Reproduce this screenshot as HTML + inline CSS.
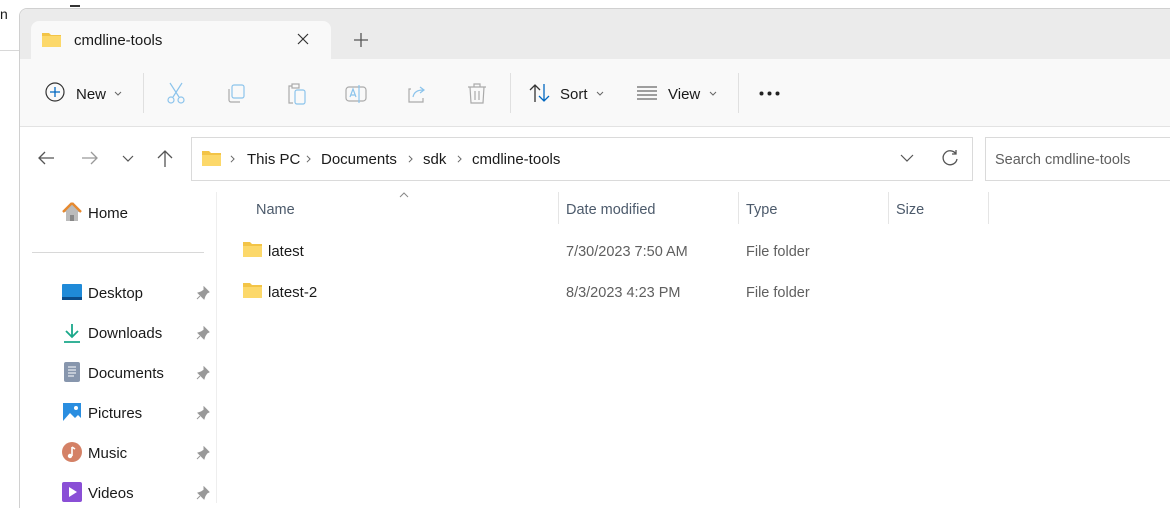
<!DOCTYPE html>
<html><head><meta charset="utf-8"><style>
*{margin:0;padding:0;box-sizing:border-box}
body{width:1170px;height:503px;overflow:hidden;background:#fff;font-family:"Liberation Sans",sans-serif;font-size:14px;color:#1a1a1a;position:relative}
.a{position:absolute}
.win{left:19px;top:8px;width:1160px;height:500px;background:#fff;border-left:1px solid #d0d0d0;border-top:1px solid #d0d0d0;border-top-left-radius:8px;overflow:hidden}
.t{white-space:nowrap}
.g{color:#5f5f5f}
</style></head><body>
<div class="a" style="left:0;top:50px;width:19px;height:1px;background:#d8d8d8"></div>
<div class="a t" style="left:0;top:6px;font-size:14px">n</div>
<div class="a" style="left:70px;top:5px;width:10px;height:2px;background:#333"></div>
<div class="a win">
 <div class="a" style="left:0;top:0;width:1160px;height:50px;background:#ebebeb"></div>
 <div class="a" style="left:11px;top:12px;width:300px;height:40px;background:#f9f9f9;border-radius:8px 8px 0 0"></div>
 <div class="a" style="left:0;top:50px;width:1160px;height:68px;background:#f9f9f9;border-bottom:1px solid #e3e3e3"></div>
</div>
<!-- tab -->
<svg class="a" style="left:42px;top:32px" width="19" height="15"><path d="M0 1h7l2 2h10v12H0z" fill="#f3c447"/><rect x="0" y="4" width="19" height="11" fill="#fcd86a"/></svg>
<div class="a t" style="left:74px;top:32px;font-size:15px">cmdline-tools</div>
<svg class="a" style="left:297px;top:33px" width="12" height="12"><path d="M1 1l10 10M11 1L1 11" stroke="#333" stroke-width="1.2"/></svg>
<svg class="a" style="left:354px;top:33px" width="14" height="14"><path d="M7 0v14M0 7h14" stroke="#555" stroke-width="1.3"/></svg>
<!-- toolbar -->
<svg class="a" style="left:45px;top:82px" width="20" height="20"><circle cx="10" cy="10" r="9" fill="none" stroke="#333" stroke-width="1.2"/><path d="M10 5v10M5 10h10" stroke="#0067c0" stroke-width="1.3"/></svg>
<div class="a t" style="left:76px;top:86px;font-size:15px">New</div>
<svg class="a" style="left:114px;top:91px" width="8" height="5"><path d="M1 1l3 3 3-3" stroke="#666" fill="none"/></svg>
<div class="a" style="left:143px;top:73px;width:1px;height:40px;background:#e0e0e0"></div>
<svg class="a" style="left:166px;top:82px" width="20" height="22" fill="none" stroke="#8cc4ec" stroke-width="1.2"><path d="M4 1l9 14M16 1L7 15"/><circle cx="5" cy="18" r="3"/><circle cx="15" cy="18" r="3"/></svg>
<svg class="a" style="left:226px;top:84px" width="20" height="20" fill="none" stroke-width="1.2"><rect x="6" y="1" width="12" height="13" rx="2" stroke="#8cc4ec"/><path d="M3 5v11a2 2 0 0 0 2 2h9" stroke="#aaa"/></svg>
<svg class="a" style="left:286px;top:83px" width="20" height="22" fill="none" stroke-width="1.2"><path d="M6 3H3v17h4" stroke="#aaa"/><rect x="6" y="1" width="7" height="4" stroke="#aaa"/><rect x="9" y="7" width="10" height="14" rx="2" stroke="#8cc4ec"/></svg>
<svg class="a" style="left:345px;top:84px" width="22" height="20" fill="none" stroke-width="1.2"><rect x="1" y="3" width="20" height="14" rx="3" stroke="#aaa"/><path d="M5 13l3-8 3 8M6 11h4" stroke="#8cc4ec"/><path d="M14 1v18" stroke="#8cc4ec"/></svg>
<svg class="a" style="left:406px;top:84px" width="22" height="20" fill="none" stroke-width="1.2"><path d="M5 5H3v13h14v-4" stroke="#aaa"/><path d="M7 13c1-5 5-7 10-7M14 3l4 3-4 3" stroke="#8cc4ec"/></svg>
<svg class="a" style="left:467px;top:83px" width="20" height="22" fill="none" stroke="#aaa" stroke-width="1.2"><path d="M1 4h18M7 4V1h6v3M3 4l1 16h12l1-16M8 8v9M12 8v9"/></svg>
<div class="a" style="left:510px;top:73px;width:1px;height:40px;background:#e0e0e0"></div>
<svg class="a" style="left:529px;top:83px" width="22" height="20" fill="none" stroke-width="1.3"><path d="M6 19V2M1 7l5-5 5 5" stroke="#333"/><path d="M15 1v17M10 13l5 5 5-5" stroke="#0067c0"/></svg>
<div class="a t" style="left:560px;top:86px;font-size:15px">Sort</div>
<svg class="a" style="left:596px;top:91px" width="8" height="5"><path d="M1 1l3 3 3-3" stroke="#666" fill="none"/></svg>
<svg class="a" style="left:637px;top:86px" width="20" height="14"><path d="M0 1h20M0 5h20M0 9h20M0 13h20" stroke="#444" stroke-width="1.1"/></svg>
<div class="a t" style="left:668px;top:86px;font-size:15px">View</div>
<svg class="a" style="left:709px;top:91px" width="8" height="5"><path d="M1 1l3 3 3-3" stroke="#666" fill="none"/></svg>
<div class="a" style="left:738px;top:73px;width:1px;height:40px;background:#e0e0e0"></div>
<svg class="a" style="left:759px;top:91px" width="22" height="5"><circle cx="2.5" cy="2.5" r="2" fill="#222"/><circle cx="10.5" cy="2.5" r="2" fill="#222"/><circle cx="18.5" cy="2.5" r="2" fill="#222"/></svg>
<!-- nav -->
<svg class="a" style="left:37px;top:150px" width="18" height="16" fill="none" stroke="#555" stroke-width="1.3"><path d="M17 8H2M8 2L2 8l6 6"/></svg>
<svg class="a" style="left:81px;top:150px" width="18" height="16" fill="none" stroke="#999" stroke-width="1.3"><path d="M1 8h15M10 2l6 6-6 6"/></svg>
<svg class="a" style="left:122px;top:155px" width="12" height="7" fill="none" stroke="#555" stroke-width="1.2"><path d="M1 1l5 5 5-5"/></svg>
<svg class="a" style="left:156px;top:149px" width="18" height="18" fill="none" stroke="#555" stroke-width="1.3"><path d="M9 18V2M2 9l7-7 7 7"/></svg>
<div class="a" style="left:191px;top:137px;width:782px;height:44px;border:1px solid #dadada;background:#fff"></div>
<svg class="a" style="left:202px;top:151px" width="19" height="15"><path d="M0 0h7l2 2h10v13H0z" fill="#f3c447"/><rect x="0" y="4" width="19" height="11" fill="#fcd86a"/></svg>
<svg style="display:none"><symbol id="chev" viewBox="0 0 6 10"><path d="M1 1l4 4-4 4" fill="none" stroke="#666" stroke-width="1.2"/></symbol></svg>
<svg class="a" style="left:230px;top:155px" width="5" height="8"><use href="#chev"/></svg>
<div class="a t" style="left:247px;top:151px;font-size:15px">This PC</div>
<svg class="a" style="left:306px;top:155px" width="5" height="8"><use href="#chev"/></svg>
<div class="a t" style="left:321px;top:151px;font-size:15px">Documents</div>
<svg class="a" style="left:408px;top:155px" width="5" height="8"><use href="#chev"/></svg>
<div class="a t" style="left:423px;top:151px;font-size:15px">sdk</div>
<svg class="a" style="left:457px;top:155px" width="5" height="8"><use href="#chev"/></svg>
<div class="a t" style="left:472px;top:151px;font-size:15px">cmdline-tools</div>
<svg class="a" style="left:900px;top:154px" width="14" height="8" fill="none" stroke="#555" stroke-width="1.2"><path d="M1 1l6 6 6-6"/></svg>
<svg class="a" style="left:941px;top:149px" width="18" height="18" fill="none" stroke="#555" stroke-width="1.3"><path d="M15 5A7 7 0 1 0 16 10M15 1v4h-4"/></svg>
<div class="a" style="left:985px;top:137px;width:200px;height:44px;border:1px solid #dadada;background:#fff"></div>
<div class="a t" style="left:995px;top:152px;font-size:14.5px;color:#5f5f5f">Search cmdline-tools</div>
<!-- sidebar -->
<div class="a" style="left:216px;top:192px;width:1px;height:311px;background:#eee"></div>
<svg class="a" style="left:62px;top:202px" width="20" height="19"><path d="M10 1L1 10h3v9h12v-9h3z" fill="#bbb"/><path d="M10 1L1 10M10 1l9 9" stroke="#e6892f" stroke-width="2.4" fill="none"/><rect x="8" y="13" width="4" height="6" fill="#888"/></svg>
<div class="a t" style="left:88px;top:205px;font-size:15px">Home</div>
<div class="a" style="left:32px;top:252px;width:172px;height:1px;background:#d8d8d8"></div>
<svg class="a" style="left:62px;top:284px" width="20" height="16"><rect width="20" height="16" rx="1" fill="#1f8ad8"/><rect y="13" width="20" height="3" fill="#0b4c8a"/></svg>
<div class="a t" style="left:88px;top:285px;font-size:15px">Desktop</div>
<svg class="a" style="left:62px;top:323px" width="20" height="20" fill="none" stroke="#1aa88a" stroke-width="1.8"><path d="M10 1v13M4 8l6 6 6-6M2 19h16"/></svg>
<div class="a t" style="left:88px;top:325px;font-size:15px">Downloads</div>
<svg class="a" style="left:64px;top:362px" width="16" height="20"><rect width="16" height="20" rx="2" fill="#8796ad"/><path d="M4 5h8M4 8h8M4 11h8M4 14h6" stroke="#e6e9ef" stroke-width="1.2"/></svg>
<div class="a t" style="left:88px;top:365px;font-size:15px">Documents</div>
<svg class="a" style="left:63px;top:403px" width="18" height="18"><rect width="18" height="18" fill="#2a8ee0"/><path d="M0 18l7-8 5 5 3-3 3 3v3z" fill="#fff"/><circle cx="13" cy="5" r="2" fill="#fff"/></svg>
<div class="a t" style="left:88px;top:405px;font-size:15px">Pictures</div>
<svg class="a" style="left:62px;top:442px" width="20" height="20"><circle cx="10" cy="10" r="10" fill="#d48166"/><path d="M10 5v9" stroke="#fff" stroke-width="1.6"/><circle cx="8" cy="14" r="2.2" fill="#fff"/><path d="M10 5l3 2" stroke="#fff" stroke-width="1.6"/></svg>
<div class="a t" style="left:88px;top:445px;font-size:15px">Music</div>
<svg class="a" style="left:62px;top:482px" width="20" height="20"><rect width="20" height="20" rx="2" fill="#8a4fd6"/><path d="M7 5v10l8-5z" fill="#fff"/></svg>
<div class="a t" style="left:88px;top:485px;font-size:15px">Videos</div>
<svg style="display:none"><symbol id="pin" viewBox="0 0 14 14"><path d="M8 1l5 5-2 1-2 3-1 3-6-6 3-1 3-2z M4 10l-3 3" fill="#999" stroke="#999"/></symbol></svg>
<svg class="a" style="left:196px;top:286px" width="14" height="14"><use href="#pin"/></svg>
<svg class="a" style="left:196px;top:326px" width="14" height="14"><use href="#pin"/></svg>
<svg class="a" style="left:196px;top:366px" width="14" height="14"><use href="#pin"/></svg>
<svg class="a" style="left:196px;top:406px" width="14" height="14"><use href="#pin"/></svg>
<svg class="a" style="left:196px;top:446px" width="14" height="14"><use href="#pin"/></svg>
<svg class="a" style="left:196px;top:486px" width="14" height="14"><use href="#pin"/></svg>
<!-- headers -->
<svg class="a" style="left:399px;top:192px" width="10" height="6" fill="none" stroke="#888"><path d="M1 5l4-4 4 4"/></svg>
<div class="a t" style="left:256px;top:202px;font-size:14.5px;color:#4c5a6b">Name</div>
<div class="a" style="left:558px;top:192px;width:1px;height:32px;background:#e5e5e5"></div>
<div class="a t" style="left:566px;top:202px;font-size:14.5px;color:#4c5a6b">Date modified</div>
<div class="a" style="left:738px;top:192px;width:1px;height:32px;background:#e5e5e5"></div>
<div class="a t" style="left:746px;top:202px;font-size:14.5px;color:#4c5a6b">Type</div>
<div class="a" style="left:888px;top:192px;width:1px;height:32px;background:#e5e5e5"></div>
<div class="a t" style="left:896px;top:202px;font-size:14.5px;color:#4c5a6b">Size</div>
<div class="a" style="left:988px;top:192px;width:1px;height:32px;background:#e5e5e5"></div>
<!-- rows -->
<svg class="a" style="left:243px;top:242px" width="19" height="15"><path d="M0 0h7l2 2h10v13H0z" fill="#f3c447"/><rect x="0" y="4" width="19" height="11" fill="#fcd86a"/></svg>
<div class="a t" style="left:268px;top:243px;font-size:15px">latest</div>
<div class="a t g" style="left:566px;top:244px;font-size:14.5px">7/30/2023 7:50 AM</div>
<div class="a t g" style="left:746px;top:244px;font-size:14.5px">File folder</div>
<svg class="a" style="left:243px;top:283px" width="19" height="15"><path d="M0 0h7l2 2h10v13H0z" fill="#f3c447"/><rect x="0" y="4" width="19" height="11" fill="#fcd86a"/></svg>
<div class="a t" style="left:268px;top:284px;font-size:15px">latest-2</div>
<div class="a t g" style="left:566px;top:285px;font-size:14.5px">8/3/2023 4:23 PM</div>
<div class="a t g" style="left:746px;top:285px;font-size:14.5px">File folder</div>
</body></html>
